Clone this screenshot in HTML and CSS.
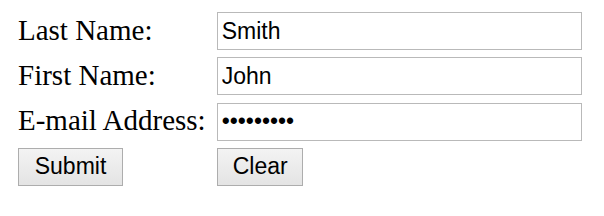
FILE: index.html
```html
<!DOCTYPE html>
<html>
<head>
<meta charset="utf-8">
<link rel="stylesheet" href="styles.css">
</head>
<body>
<form class="form">
  <label class="label" for="ln">Last Name:</label>
  <input class="field" id="ln" type="text" value="Smith">
  <label class="label" for="fn">First Name:</label>
  <input class="field" id="fn" type="text" value="John">
  <label class="label" for="em">E-mail Address:</label>
  <input class="field" id="em" type="password" value="123456789">
  <div class="cell"><button class="btn btn-submit" type="button">Submit</button></div>
  <div class="cell"><button class="btn btn-clear" type="button">Clear</button></div>
</form>
</body>
</html>
```
FILE: styles.css
```css
html, body {
  margin: 0;
  padding: 0;
  background: #ffffff;
}
.form {
  display: grid;
  grid-template-columns: max-content 365px;
  column-gap: 11px;
  row-gap: 7.33px;
  padding: 12px 0 0 18px;
  align-items: center;
}
.label {
  font-family: "Liberation Serif", "Times New Roman", serif;
  font-size: 29px;
  color: #000;
  padding-bottom: 2px;
  white-space: nowrap;
}
.field {
  box-sizing: border-box;
  width: 365px;
  height: 38px;
  margin: 0;
  border: 1px solid #b9b9b9;
  padding: 0 4px;
  font-family: "Liberation Sans", Arial, sans-serif;
  font-size: 23px;
  color: #000;
  background: #fff;
  outline: none;
}
.cell {
  display: flex;
}
.btn {
  box-sizing: border-box;
  height: 38px;
  margin: 0;
  padding: 0 15px;
  border: 1px solid #adadad;
  border-radius: 0;
  background: linear-gradient(#f3f3f3, #e4e4e4);
  font-family: "Liberation Sans", Arial, sans-serif;
  font-size: 23px;
  color: #000;
}
.btn-submit {
  width: 105px;
}
.btn-clear {
  width: 86px;
}
```
